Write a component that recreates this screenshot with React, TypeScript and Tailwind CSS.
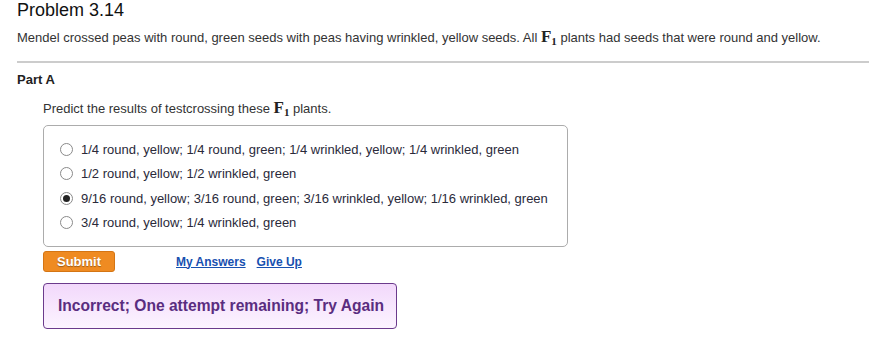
const options = [
  '1/4 round, yellow; 1/4 round, green; 1/4 wrinkled, yellow; 1/4 wrinkled, green',
  '1/2 round, yellow; 1/2 wrinkled, green',
  '9/16 round, yellow; 3/16 round, green; 3/16 wrinkled, yellow; 1/16 wrinkled, green',
  '3/4 round, yellow; 1/4 wrinkled, green',
];

const F1 = () => (
  <span className="inline-block font-['Liberation_Serif',serif] font-bold text-[17px] leading-none text-[#222]">
    F<span className="relative top-[3px] text-[11px]">1</span>
  </span>
);

const Radio = ({ checked }: { checked: boolean }) => (
  <span className="flex h-[13px] w-[13px] items-center justify-center rounded-full border border-[#8a8a8a] bg-white">
    {checked && <span className="h-[7px] w-[7px] rounded-full bg-[#222]" />}
  </span>
);

export default function App() {
  return (
    <div className="min-h-screen bg-white font-['Liberation_Sans',Arial,sans-serif] text-[#333]">
      <div className="pl-[17px]">
        <h1 className="text-[18px] leading-[20px] text-[#111]">Problem 3.14</h1>
        <p className="mt-[8px] h-[18px] text-[13px] leading-[18px]">
          Mendel crossed peas with round, green seeds with peas having wrinkled, yellow seeds. All <F1 /> plants had seeds that were round and yellow.
        </p>
        <div className="mt-[15px] h-[2px] bg-[#cccccc]" />
        <h2 className="mt-[8px] text-[13px] font-bold leading-[18px] text-[#222]">Part A</h2>
      </div>
      <div className="pl-[43px]">
        <p className="mt-[10px] h-[18px] text-[13px] leading-[18px]">
          Predict the results of testcrossing these <F1 /> plants.
        </p>
        <div className="mt-[8px] w-[525px] rounded-[5px] border border-[#acacac] px-[16px] pt-[11px] pb-[11px]">
          {options.map((o, i) => (
            <label key={i} className="flex h-[24.5px] items-center gap-[8px] text-[13px] text-[#2a2a3a]">
              <Radio checked={i === 2} />
              <span>{o}</span>
            </label>
          ))}
        </div>
        <div className="mt-[4px] flex h-[21px] items-center">
          <button className="h-[21px] w-[72px] rounded-[3px] border border-[#d47514] bg-[#ef8b22] text-[13px] font-bold leading-[19px] text-white [text-shadow:0_1px_1px_rgba(0,0,0,0.35)]">
            Submit
          </button>
          <a className="ml-[61px] text-[12px] font-bold leading-[14px] text-[#1750b0] underline">My Answers</a>
          <a className="ml-[11px] text-[12px] font-bold leading-[14px] text-[#1750b0] underline">Give Up</a>
        </div>
        <div className="mt-[11px] flex h-[46px] w-[354px] items-center rounded-[4px] border border-[#6b3a8c] bg-gradient-to-b from-[#f2d8fb] to-[#fcf4ff] pl-[14px]">
          <span className="text-[15.6px] font-bold text-[#5a2d80]">Incorrect; One attempt remaining; Try Again</span>
        </div>
      </div>
    </div>
  );
}
